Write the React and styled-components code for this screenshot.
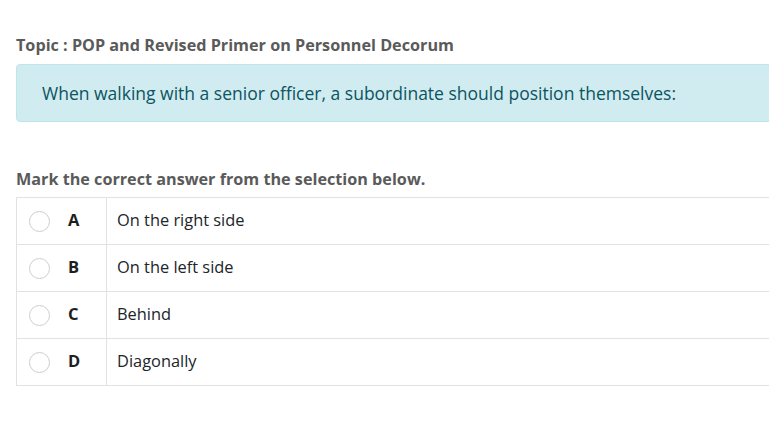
import React from "react";
import styled, { createGlobalStyle } from "styled-components";

const Global = createGlobalStyle`
  html, body { margin: 0; padding: 0; background: #fff; overflow: hidden; }
  body { font-family: "Open Sans", "Noto Sans", sans-serif; }
`;

const Page = styled.div`
  width: 790px;
  padding: 34px 0 0 16px;
  box-sizing: border-box;
`;

const Topic = styled.h4`
  margin: 0 0 8px;
  font-size: 16.2px;
  font-weight: 700;
  line-height: 22px;
  color: #5a5a5a;
`;

const Alert = styled.div`
  background: #d1ecf1;
  border: 1px solid #bee5eb;
  border-radius: 4px;
  color: #0c5460;
  font-size: 17.5px;
  line-height: 26px;
  padding: 15px 25px 15px 25px;
  margin-bottom: 46px;
`;

const Instruction = styled.h5`
  margin: 0 0 7px;
  font-size: 16.2px;
  font-weight: 700;
  line-height: 22px;
  color: #5a5a5a;
`;

const Table = styled.div`
  border-top: 1px solid #e2e2e2;
  border-left: 1px solid #e2e2e2;
`;

const Row = styled.label`
  display: grid;
  grid-template-columns: 90px 1fr;
  height: 47px;
  border-bottom: 1px solid #e2e2e2;
  box-sizing: border-box;
`;

const Choice = styled.div`
  display: flex;
  align-items: center;
  border-right: 1px solid #e2e2e2;
  padding-left: 12px;
`;

const Radio = styled.span`
  width: 19px;
  height: 19px;
  border: 1px solid #c9ced4;
  border-radius: 50%;
  background: #fff;
  flex: none;
`;

const Letter = styled.span`
  margin-left: 18px;
  margin-bottom: 4px;
  font-size: 16.5px;
  font-weight: 700;
  color: #1e1e1e;
`;

const Answer = styled.div`
  display: flex;
  align-items: center;
  padding: 0 0 3px 10px;
  font-size: 16.4px;
  color: #212529;
`;

const options = [
  ["A", "On the right side"],
  ["B", "On the left side"],
  ["C", "Behind"],
  ["D", "Diagonally"],
];

export default function App() {
  return (
    <>
      <Global />
      <Page>
        <Topic>Topic : POP and Revised Primer on Personnel Decorum</Topic>
        <Alert>
          When walking with a senior officer, a subordinate should position themselves:
        </Alert>
        <Instruction>Mark the correct answer from the selection below.</Instruction>
        <Table>
          {options.map(([l, t]) => (
            <Row key={l}>
              <Choice>
                <Radio />
                <Letter>{l}</Letter>
              </Choice>
              <Answer>{t}</Answer>
            </Row>
          ))}
        </Table>
      </Page>
    </>
  );
}
